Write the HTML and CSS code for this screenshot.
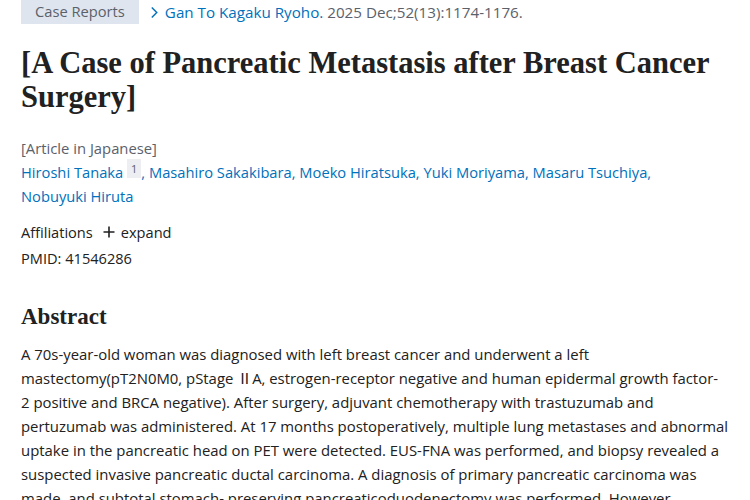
FILE: index.html
```html
<!DOCTYPE html>
<html>
<head>
<meta charset="utf-8">
<link rel="stylesheet" href="styles.css">
</head>
<body>
<main class="page">
  <div class="cite-row">
    <span class="badge">Case Reports</span>
    <span class="journal"><svg class="chev" viewBox="0 0 10 14" width="9" height="13"><path d="M2 1.5 L7.5 7 L2 12.5" fill="none" stroke="#0071bc" stroke-width="1.6"/></svg><a class="link">Gan To Kagaku Ryoho.</a> <span class="cit">2025 Dec;52(13):1174-1176.</span></span>
  </div>
  <h1 class="title">[A Case of Pancreatic Metastasis after Breast Cancer Surgery]</h1>
  <div class="lang">[Article in Japanese]</div>
  <div class="authors">
    <span class="author"><a class="link">Hiroshi Tanaka</a> <sup class="aff">1</sup>,</span> <span class="author"><a class="link">Masahiro Sakakibara</a>,</span> <span class="author"><a class="link">Moeko Hiratsuka</a>,</span> <span class="author"><a class="link">Yuki Moriyama</a>,</span> <span class="author"><a class="link">Masaru Tsuchiya</a>,</span> <span class="author"><a class="link">Nobuyuki Hiruta</a></span>
  </div>
  <div class="affil">
    <span>Affiliations</span>
    <span class="expand"><svg viewBox="0 0 12 12" width="12" height="12"><path d="M6 0.5 V11.5 M0.5 6 H11.5" stroke="#212121" stroke-width="1.6"/></svg>expand</span>
  </div>
  <div class="pmid">PMID: 41546286</div>
  <h2 class="abs-h">Abstract</h2>
  <p class="abs">A 70s-year-old woman was diagnosed with left breast cancer and underwent a left<br>mastectomy(pT2N0M0, pStage <span class="cjk">Ⅱ</span>A, estrogen-receptor negative and human epidermal growth factor-<br>2 positive and BRCA negative). After surgery, adjuvant chemotherapy with trastuzumab and<br>pertuzumab was administered. At 17 months postoperatively, multiple lung metastases and abnormal<br>uptake in the pancreatic head on PET were detected. EUS-FNA was performed, and biopsy revealed a<br>suspected invasive pancreatic ductal carcinoma. A diagnosis of primary pancreatic carcinoma was<br>made, and subtotal stomach- preserving pancreaticoduodenectomy was performed. However,<br>histopathological examination revealed metastasis from breast cancer.</p>
</main>
</body>
</html>
```

FILE: styles.css
```css
html, body { margin: 0; padding: 0; background: #fff; }
body {
  font-family: "Open Sans", "Noto Sans", sans-serif;
  color: #212121;
  font-size: 14.6px;
  height: 500px;
  overflow: hidden;
}
.page {
  width: 706px;
  padding-left: 21px;
}
.link { color: #0071bc; text-decoration: none; }
.cite-row {
  display: flex;
  align-items: center;
  gap: 11px;
  height: 24px;
}
.badge {
  background: #dfe5ee;
  color: #5b616b;
  height: 26px;
  line-height: 26px;
  padding: 0 14px;
  font-size: 14.7px;
  box-sizing: border-box;
  margin-top: -3px;
}
.journal { color: #5b616b; font-size: 15.2px; }
.chev { margin-right: 6px; vertical-align: -1px; }
.title {
  font-family: "Liberation Serif", serif;
  font-weight: bold;
  font-size: 30.5px;
  line-height: 34px;
  margin: 22px 0 22px;
  color: #212121;
}
.lang { color: #5b616b; font-size: 14.8px; line-height: 24px; }
.authors { font-size: 14.7px; line-height: 24px; color: #0071bc; }
.author { white-space: nowrap; }
.aff {
  font-size: 11px;
  color: #5b616b;
  background: #eceef1;
  padding: 2px 4px;
  vertical-align: 5px;
  line-height: 1;
}
.affil {
  display: flex;
  gap: 10px;
  margin-top: 12px;
  line-height: 24px;
}
.expand { display: flex; align-items: center; gap: 6px; }
.pmid { line-height: 24px; margin-top: 2px; }
.abs-h {
  font-family: "Liberation Serif", serif;
  font-weight: bold;
  font-size: 23px;
  margin: 32px 0 10px;
  line-height: 30px;
}
.abs { margin: 0; font-size: 14.9px; line-height: 24px; white-space: nowrap; }
.cjk { font-family: "Noto Sans CJK JP", sans-serif; line-height: 1; }
```
